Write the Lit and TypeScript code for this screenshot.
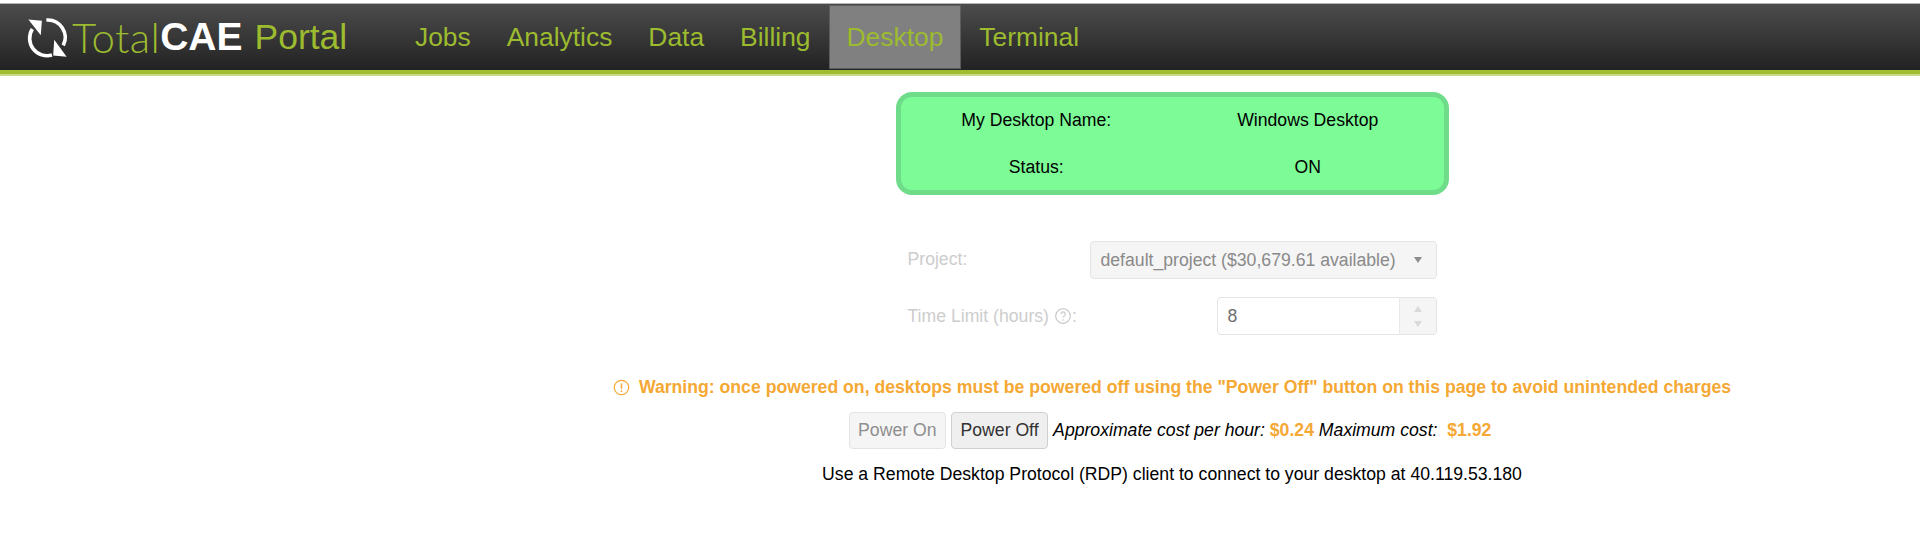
import { LitElement, html, css } from 'lit';
import { customElement } from 'lit/decorators.js';

const NAV_ITEMS = ['Jobs', 'Analytics', 'Data', 'Billing', 'Desktop', 'Terminal'];

@customElement('app-root')
export class AppRoot extends LitElement {
  static styles = css`
    :host {
      display: block;
      min-height: 537px;
      background: #fff;
      font-family: 'Liberation Sans', Arial, sans-serif;
      font-size: 17.65px;
      color: #000;
    }

    .topbar {
      margin-top: 3px;
      height: 66px;
      display: flex;
      align-items: stretch;
      background: linear-gradient(#4c4c4c, #222);
      border-top: 1px solid #b5b5b5;
      border-bottom: 4px solid #a1bc31;
      box-shadow: 0 2px 0 #c9d98a;
    }

    .logo {
      width: 415px;
      display: flex;
      align-items: center;
      padding-left: 25px;
      box-sizing: border-box;
      flex: none;
    }
    .logo svg {
      width: 45px;
      height: 45px;
      margin-right: 2px;
      flex: none;
    }
    .logo-total {
      font-family: Lato, sans-serif;
      font-weight: 300;
      font-size: 42px;
      color: #9dbb2f;
      letter-spacing: 0.4px;
    }
    .logo-cae {
      font-weight: 700;
      font-size: 39px;
      color: #fff;
      margin-right: 12px;
    }
    .logo-portal {
      font-size: 35.5px;
      color: #9dbb2f;
    }

    nav {
      display: flex;
      align-items: stretch;
      margin-left: -18px;
    }
    nav a {
      display: flex;
      align-items: center;
      padding: 0 18px;
      font-size: 26.4px;
      color: #9dbb2f;
    }
    nav a.active {
      background: #808080;
      box-shadow: inset 0 0 0 1px #5c5c5c;
      margin-top: 1px;
      margin-bottom: 1px;
    }

    main {
      padding-left: 424px;
      display: flex;
      flex-direction: column;
      align-items: center;
    }

    .status-card {
      margin-top: 18px;
      width: 553px;
      height: 103px;
      box-sizing: border-box;
      background: #7dfb97;
      border: 5px solid #6fdc8a;
      border-radius: 16px;
      display: grid;
      grid-template-columns: 1fr 1fr;
      align-content: center;
      row-gap: 27px;
      line-height: 20px;
      text-align: center;
    }

    .form {
      margin-top: 46px;
      width: 529px;
      display: flex;
      flex-direction: column;
      gap: 18px;
      color: #cdcdcd;
    }
    .form-row {
      display: flex;
      align-items: center;
      justify-content: space-between;
      height: 38px;
    }
    .form-label {
      margin-top: -2px;
    }
    .select {
      width: 347px;
      height: 38px;
      box-sizing: border-box;
      display: flex;
      align-items: center;
      justify-content: space-between;
      padding: 0 10px;
      background: #f5f5f5;
      border: 1px solid #e4e4e4;
      border-radius: 4px;
      color: #8a8a8a;
      white-space: nowrap;
    }
    .caret {
      width: 0;
      height: 0;
      border-left: 4px solid transparent;
      border-right: 4px solid transparent;
      border-top: 6px solid #8c8c8c;
      margin-right: 4px;
    }
    .help {
      width: 18px;
      height: 18px;
      vertical-align: -3px;
    }
    .number {
      width: 220px;
      height: 38px;
      box-sizing: border-box;
      display: flex;
      background: #fff;
      border: 1px solid #e4e4e4;
      border-radius: 4px;
      color: #6e6e6e;
    }
    .number-value {
      flex: 1;
      display: flex;
      align-items: center;
      padding-left: 10px;
    }
    .number-steps {
      width: 36px;
      background: #f5f5f5;
      border-left: 1px solid #e9e9e9;
      border-radius: 0 4px 4px 0;
      display: flex;
      flex-direction: column;
      align-items: center;
      justify-content: center;
      gap: 9px;
    }
    .step-up,
    .step-down {
      width: 0;
      height: 0;
      border-left: 4px solid transparent;
      border-right: 4px solid transparent;
    }
    .step-up {
      border-bottom: 6px solid #d9d9d9;
    }
    .step-down {
      border-top: 6px solid #d9d9d9;
    }

    .warning {
      margin-top: 42px;
      display: flex;
      align-items: center;
      gap: 9px;
      font-weight: 700;
      color: #f5a833;
      white-space: nowrap;
      line-height: 20px;
    }
    .warning svg {
      width: 17px;
      height: 17px;
      flex: none;
    }

    .actions {
      margin-top: 15px;
      padding-right: 4px;
      display: flex;
      align-items: center;
      white-space: nowrap;
      font-style: italic;
    }
    .btn {
      height: 37px;
      box-sizing: border-box;
      padding: 0 8.5px;
      display: flex;
      align-items: center;
      font-style: normal;
      border-radius: 4px;
      margin-right: 5px;
      border: 1px solid #d0d0d0;
      background: #efefef;
      color: #333;
    }
    .btn.disabled {
      background: #f5f5f5;
      border-color: #e4e4e4;
      color: #8f8f8f;
    }
    .cost {
      font-style: normal;
      font-weight: 700;
      color: #f5a833;
    }

    .rdp {
      margin-top: 15px;
      line-height: 20px;
      white-space: nowrap;
    }
  `;

  render() {
    return html`
      <header class="topbar">
        <div class="logo">
          <svg viewBox="0 0 40 40" fill="none">
            <path d="M19 4.5A15.5 15.5 0 0 1 34 27" stroke="#fff" stroke-width="3.2" />
            <path d="M24 35.6A15.5 15.5 0 0 1 6.5 12.5" stroke="#fff" stroke-width="3.2" />
            <polygon points="3,4 15,5 14,18" fill="#fff" />
            <polygon points="26,22 37,37 25,36" fill="#fff" />
          </svg>
          <span class="logo-total">Total</span><span class="logo-cae">CAE</span>
          <span class="logo-portal">Portal</span>
        </div>
        <nav>
          ${NAV_ITEMS.map(
            (item) => html`<a class=${item === 'Desktop' ? 'active' : ''}>${item}</a>`,
          )}
        </nav>
      </header>
      <main>
        <section class="status-card">
          <div>My Desktop Name:</div>
          <div>Windows Desktop</div>
          <div>Status:</div>
          <div>ON</div>
        </section>

        <div class="form">
          <div class="form-row">
            <span class="form-label">Project:</span>
            <div class="select">
              <span>default_project ($30,679.61 available)</span>
              <span class="caret"></span>
            </div>
          </div>
          <div class="form-row">
            <span>
              Time Limit (hours)
              <svg class="help" viewBox="0 0 16 16" fill="none">
                <circle cx="8" cy="8" r="6.5" stroke="#c4c4c4" />
                <path d="M6 6.4a2 2 0 1 1 3 1.7c-.7.4-1 .8-1 1.5" stroke="#c4c4c4" />
                <circle cx="8" cy="11.6" r=".7" fill="#c4c4c4" />
              </svg>:
            </span>
            <div class="number">
              <span class="number-value">8</span>
              <span class="number-steps">
                <span class="step-up"></span>
                <span class="step-down"></span>
              </span>
            </div>
          </div>
        </div>

        <div class="warning">
          <svg viewBox="0 0 17 17" fill="none">
            <circle cx="8.5" cy="8.5" r="7.2" stroke="#f5a833" stroke-width="1.2" />
            <path d="M8.5 4.4v5.4" stroke="#f5a833" stroke-width="1.5" />
            <circle cx="8.5" cy="12.2" r=".9" fill="#f5a833" />
          </svg>
          <span>Warning: once powered on, desktops must be powered off using the "Power Off" button on this page to avoid unintended charges</span>
        </div>

        <div class="actions">
          <span class="btn disabled">Power On</span>
          <span class="btn">Power Off</span>
          <span>Approximate cost per hour:&nbsp;<span class="cost">$0.24</span> Maximum cost:&nbsp; <span class="cost">$1.92</span></span>
        </div>

        <div class="rdp">Use a Remote Desktop Protocol (RDP) client to connect to your desktop at 40.119.53.180</div>
      </main>
    `;
  }
}
